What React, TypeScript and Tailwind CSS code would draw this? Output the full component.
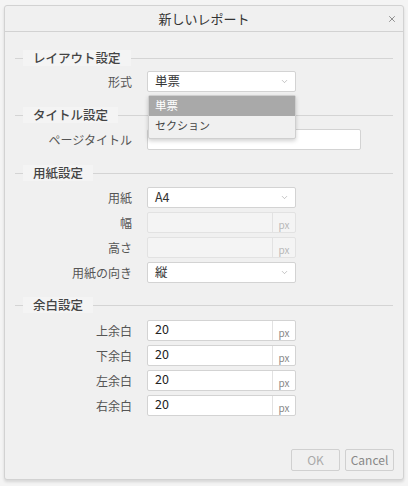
import { ChevronDown, X } from 'lucide-react';

const font = { fontFamily: '"Noto Sans CJK JP", "Noto Sans", sans-serif' };

function Legend({ title }: { title: string }) {
  return (
    <div className="flex items-center h-[16px]">
      <div className="w-[8px] h-px bg-[#d4d4d4]" />
      <div className="px-[10px] h-[16px] flex items-center bg-[#f4f4f4] text-[12.5px] font-medium text-[#444] leading-none">
        {title}
      </div>
      <div className="flex-1 h-px bg-[#d4d4d4]" />
    </div>
  );
}

function Row({ label, children }: { label: string; children: React.ReactNode }) {
  return (
    <div className="flex items-center h-[21px]">
      <div className="w-[121px] pr-[4px] text-right text-[12px] text-[#555] leading-none">{label}</div>
      <div className="ml-[11px]">{children}</div>
    </div>
  );
}

function Select({ value }: { value: string }) {
  return (
    <div className="w-[149px] h-[21px] bg-white border border-[#d3d3d3] rounded-[2px] flex items-center justify-between pl-[7px] pr-[6px]">
      <span className="text-[12.5px] text-[#333] leading-none">{value}</span>
      <ChevronDown className="w-[9px] h-[9px] text-[#999]" strokeWidth={1.5} />
    </div>
  );
}

function UnitInput({ value, disabled }: { value?: string; disabled?: boolean }) {
  return (
    <div
      className={
        disabled
          ? 'w-[149px] h-[21px] flex border border-[#e2e2e2] bg-[#f4f4f4] rounded-[2px]'
          : 'w-[149px] h-[21px] flex border border-[#d3d3d3] bg-white rounded-[2px]'
      }
    >
      <div className="flex-1 flex items-center pl-[7px] pb-[2px] text-[12.5px] text-[#222] leading-none">{value}</div>
      <div
        className={
          disabled
            ? 'w-[23px] border-l border-[#e2e2e2] flex items-end justify-center pb-[2px] text-[10px] text-[#b8b8b8] leading-none'
            : 'w-[23px] border-l border-[#e2e2e2] flex items-end justify-center pb-[2px] text-[10px] text-[#888] leading-none'
        }
      >
        px
      </div>
    </div>
  );
}

export default function App() {
  return (
    <div className="w-[408px] h-[486px] bg-[#f4f4f4] pt-[5px] pl-[4px]" style={font}>
      <div className="w-[400px] h-[475px] bg-[#f0f0f0] border border-[#d2d2d2] rounded-[3px] shadow-[0_2px_3px_rgba(0,0,0,0.12)] flex flex-col">
        <div className="h-[26px] border-b border-[#d2d2d2] flex items-center justify-center relative">
          <span className="text-[13px] text-[#333] leading-none">新しいレポート</span>
          <X className="absolute right-[6px] top-[8px] w-[10px] h-[10px] text-[#555]" strokeWidth={1.5} />
        </div>

        <div className="flex-1 px-[10px] pt-[18px] flex flex-col">
          {/* レイアウト設定 */}
          <Legend title="レイアウト設定" />
          <div className="mt-[5px] flex flex-col gap-[4px]">
            <Row label="形式">
              <div className="relative">
                <Select value="単票" />
                <div className="absolute left-[1px] top-[24px] w-[148px] bg-[#f0f0f0] border border-[#cfcfcf] rounded-[2px] shadow-[0_2px_4px_rgba(0,0,0,0.18)] z-10 flex flex-col">
                  <div className="h-[20px] bg-[#a9a9a9] flex items-center pl-[6px] text-[11.5px] text-white leading-none">単票</div>
                  <div className="h-[22px] flex items-center pl-[6px] pb-[3px] text-[11px] text-[#444] leading-none">セクション</div>
                </div>
              </div>
            </Row>
          </div>

          {/* タイトル設定 */}
          <div className="mt-[15px]">
            <Legend title="タイトル設定" />
          </div>
          <div className="mt-[6px] flex flex-col gap-[4px]">
            <Row label="ページタイトル">
              <div className="w-[214px] h-[21px] bg-white border border-[#d3d3d3] rounded-[2px]" />
            </Row>
          </div>

          {/* 用紙設定 */}
          <div className="mt-[15px]">
            <Legend title="用紙設定" />
          </div>
          <div className="mt-[6px] flex flex-col gap-[4px]">
            <Row label="用紙">
              <Select value="A4" />
            </Row>
            <Row label="幅">
              <UnitInput disabled />
            </Row>
            <Row label="高さ">
              <UnitInput disabled />
            </Row>
            <Row label="用紙の向き">
              <Select value="縦" />
            </Row>
          </div>

          {/* 余白設定 */}
          <div className="mt-[14px]">
            <Legend title="余白設定" />
          </div>
          <div className="mt-[7px] flex flex-col gap-[4px]">
            <Row label="上余白">
              <UnitInput value="20" />
            </Row>
            <Row label="下余白">
              <UnitInput value="20" />
            </Row>
            <Row label="左余白">
              <UnitInput value="20" />
            </Row>
            <Row label="右余白">
              <UnitInput value="20" />
            </Row>
          </div>

          <div className="mt-auto mb-[8px] flex justify-end gap-[5px] -mr-[1px]">
            <button className="w-[49px] h-[22px] border border-[#d0d0d0] rounded-[2px] bg-[#f0f0f0] text-[12px] text-[#aaa] leading-none">
              OK
            </button>
            <button className="w-[49px] h-[22px] border border-[#d0d0d0] rounded-[2px] bg-[#f0f0f0] text-[12px] text-[#888] leading-none">
              Cancel
            </button>
          </div>
        </div>
      </div>
    </div>
  );
}
